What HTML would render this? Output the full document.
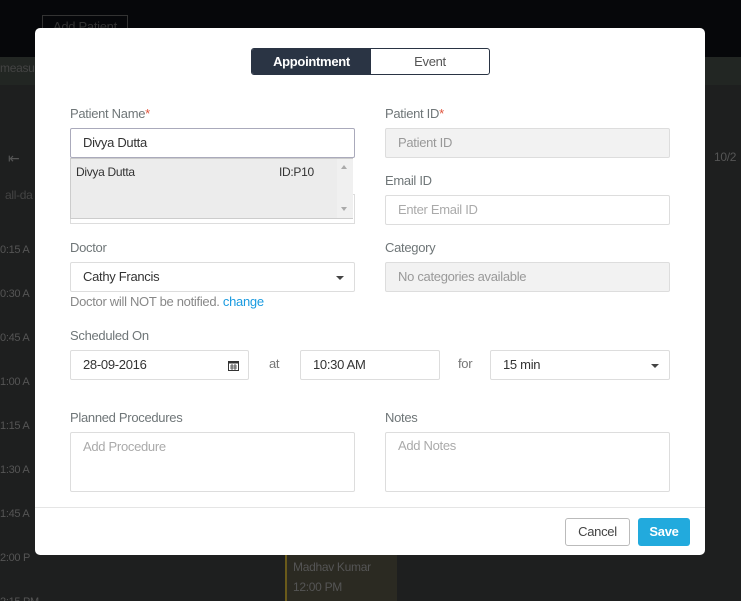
<!DOCTYPE html>
<html style="width:741px;height:601px;overflow:hidden"><head><meta charset="utf-8"><style>
*{box-sizing:border-box;margin:0;padding:0}
body{width:741px;height:601px;overflow:hidden;background:#1e1f1f;font-family:"Liberation Sans",sans-serif;font-size:13px;color:#555;position:relative;letter-spacing:-0.3px}
.a{position:absolute}
.top{left:0;top:0;width:741px;height:57px;background:#06070a}
.bar2{left:0;top:57px;width:741px;height:28px;background:#222623}
.modal{left:35px;top:28px;width:670px;height:527px;background:#fff;border-radius:5px}
.lbl{color:#6f7678;font-size:13px}
.in{border:1px solid #ddd;border-radius:2px;height:30px;background:#fff;padding-left:12px;line-height:28px;color:#444}
.dis{background:#f2f2f2;color:#999}
.ph{color:#aaa}
.caret{position:absolute;right:10px;top:13px;border-left:4px solid transparent;border-right:4px solid transparent;border-top:4px solid #444}
.req{color:#e0533b}
</style></head><body>
<div class="a top"></div>
<div class="a" style="left:42px;top:15px;width:86px;height:20px;border:1px solid #333;color:#333;font-size:13px;padding:3px 10px">Add Patient</div>
<div class="a bar2"></div>
<div class="a" style="left:0;top:61px;color:#444;font-size:12px">measu</div>
<div class="a" style="left:8px;top:150px;color:#555;font-size:14px">⇤</div>
<div class="a" style="left:5px;top:188px;color:#444;font-size:12px">all-da</div>
<div class="a" style="left:714px;top:150px;color:#555;font-size:12px">10/2</div>
<div class="a" style="left:0;top:228px;height:373px;overflow:hidden;color:#555;font-size:11px;line-height:44px">0:15 A<br>0:30 A<br>0:45 A<br>1:00 A<br>1:15 A<br>1:30 A<br>1:45 A<br>2:00 P<br>2:15 PM</div>
<div class="a" style="left:285px;top:555px;width:112px;height:46px;background:#2b2a22;border-left:2px solid #6a5a1a;color:#555;font-size:12px;padding:2px 6px;line-height:20px">Madhav Kumar<br>12:00 PM</div>
<div class="a modal"></div>
<div class="a" style="left:251px;top:48px;width:239px;height:27px;border:1px solid #2a3444;border-radius:3px;overflow:hidden">
 <div class="a" style="left:0;top:0;width:119px;height:25px;background:#2a3444;color:#fff;font-weight:bold;text-align:center;line-height:25px">Appointment</div>
 <div class="a" style="left:119px;top:0;width:118px;height:25px;color:#555;text-align:center;line-height:25px">Event</div>
</div>
<div class="a lbl" style="left:70px;top:106px">Patient Name<span class="req">*</span></div>
<div class="a in" style="left:70px;top:128px;width:285px;border-color:#aab;color:#333">Divya Dutta</div>
<div class="a" style="left:70px;top:194px;width:285px;height:30px;border:1px solid #ddd"></div>
<div class="a" style="left:70px;top:158px;width:283px;height:61px;background:#ececec;border:1px solid #ccc;color:#333;font-size:12px">
 <div class="a" style="left:5px;top:6px">Divya Dutta</div>
 <div class="a" style="left:208px;top:6px">ID:P10</div>
 <div class="a" style="left:266px;top:0;width:16px;height:59px;background:#f0f0f0"></div>
 <div class="a" style="left:270px;top:6px;border-left:3px solid transparent;border-right:3px solid transparent;border-bottom:4px solid #aaa"></div>
 <div class="a" style="left:270px;top:48px;border-left:3px solid transparent;border-right:3px solid transparent;border-top:4px solid #aaa"></div>
</div>
<div class="a lbl" style="left:385px;top:106px">Patient ID<span class="req">*</span></div>
<div class="a in dis" style="left:385px;top:128px;width:285px">Patient ID</div>
<div class="a lbl" style="left:385px;top:173px">Email ID</div>
<div class="a in ph" style="left:385px;top:195px;width:285px">Enter Email ID</div>
<div class="a lbl" style="left:70px;top:240px">Doctor</div>
<div class="a in" style="left:70px;top:262px;width:285px;color:#333">Cathy Francis<span class="caret"></span></div>
<div class="a" style="left:70px;top:294px;color:#888">Doctor will NOT be notified. <span style="color:#1a9be0">change</span></div>
<div class="a lbl" style="left:385px;top:240px">Category</div>
<div class="a in dis" style="left:385px;top:262px;width:285px">No categories available</div>
<div class="a lbl" style="left:70px;top:328px">Scheduled On</div>
<div class="a in" style="left:70px;top:350px;width:179px;color:#333">28-09-2016
 <svg class="a" style="left:157px;top:9px" width="11" height="11" viewBox="0 0 11 11"><rect x="0.5" y="1.5" width="10" height="9" fill="none" stroke="#333"/><rect x="0.5" y="1.5" width="10" height="2" fill="#333"/><path d="M2 6h7M2 8h7M4 4v6M7 4v6" stroke="#333" stroke-width="0.8"/></svg></div>
<div class="a" style="left:269px;top:356px;color:#777">at</div>
<div class="a in" style="left:300px;top:350px;width:140px;color:#333">10:30 AM</div>
<div class="a" style="left:458px;top:356px;color:#777">for</div>
<div class="a in" style="left:490px;top:350px;width:180px;color:#333">15 min<span class="caret"></span></div>
<div class="a lbl" style="left:70px;top:410px">Planned Procedures</div>
<div class="a in ph" style="left:70px;top:432px;width:285px;height:60px;line-height:28px">Add Procedure</div>
<div class="a lbl" style="left:385px;top:410px">Notes</div>
<div class="a in ph" style="left:385px;top:432px;width:285px;height:60px;line-height:26px">Add Notes</div>
<div class="a" style="left:35px;top:507px;width:670px;height:1px;background:#e5e5e5"></div>
<div class="a" style="left:565px;top:518px;width:65px;height:28px;border:1px solid #bbb;border-radius:3px;text-align:center;line-height:26px;color:#444">Cancel</div>
<div class="a" style="left:638px;top:518px;width:52px;height:28px;background:#22aadd;border-radius:3px;text-align:center;line-height:28px;color:#fff;font-weight:bold">Save</div>
</body></html>
